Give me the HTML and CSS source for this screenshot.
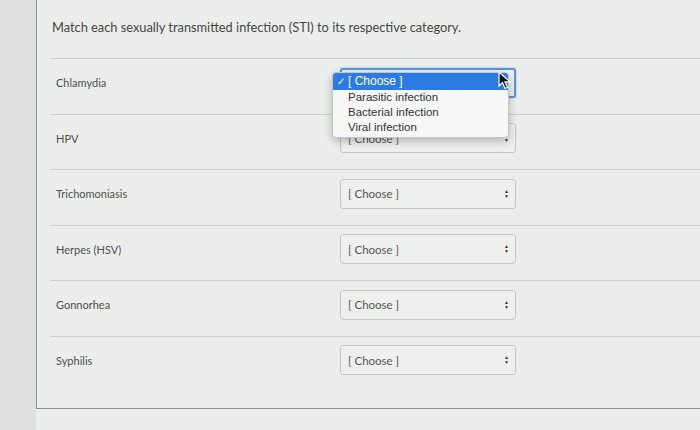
FILE: index.html
```html
<!DOCTYPE html>
<html lang="en">
<head>
  <meta charset="UTF-8">
  <title>Matching Question</title>
  <link rel="stylesheet" href="styles.css">
</head>
<body>

<div class="page">
  <div class="gutter"></div>

  <div class="panel">
    <p class="question">Match each sexually transmitted infection (STI) to its respective category.</p>

    <div class="row">
      <span class="label">Chlamydia</span>
      <div class="select focused">
        <span class="choose">[ Choose ]</span>
        <span class="arrows">&#9650;<br>&#9660;</span>
        <!-- open popup list -->
        <ul class="popup">
          <li class="picked"><span class="tick">&#10003;</span>[ Choose ]</li>
          <li>Parasitic infection</li>
          <li>Bacterial infection</li>
          <li>Viral infection</li>
        </ul>
        <svg class="cursor" width="14" height="20" viewBox="0 0 14 20">
          <path d="M1 1 L1 15 L4.5 11.5 L7 17.5 L9.5 16.5 L7 10.8 L12 10.8 Z" fill="#111" stroke="#fff" stroke-width="1.2"/>
        </svg>
      </div>
    </div>

    <div class="row">
      <span class="label">HPV</span>
      <div class="select">
        <span class="choose">[ Choose ]</span>
        <span class="arrows">&#9650;<br>&#9660;</span>
      </div>
    </div>

    <div class="row">
      <span class="label">Trichomoniasis</span>
      <div class="select">
        <span class="choose">[ Choose ]</span>
        <span class="arrows">&#9650;<br>&#9660;</span>
      </div>
    </div>

    <div class="row">
      <span class="label">Herpes (HSV)</span>
      <div class="select">
        <span class="choose">[ Choose ]</span>
        <span class="arrows">&#9650;<br>&#9660;</span>
      </div>
    </div>

    <div class="row">
      <span class="label">Gonnorhea</span>
      <div class="select">
        <span class="choose">[ Choose ]</span>
        <span class="arrows">&#9650;<br>&#9660;</span>
      </div>
    </div>

    <div class="row">
      <span class="label">Syphilis</span>
      <div class="select">
        <span class="choose">[ Choose ]</span>
        <span class="arrows">&#9650;<br>&#9660;</span>
      </div>
    </div>
  </div>
</div>

</body>
</html>
```

FILE: styles.css
```css
body {
  margin: 0;
  font-family: Lato, "Open Sans", sans-serif;
  background-color: #eceeec;
  color: #4a4a4a;
  height: 430px;
  overflow: hidden;
}
.page {
  display: flex;
  width: 700px;
}
.gutter {
  width: 36px;
  flex-shrink: 0;
  height: 430px;
  background-color: #e0e0de;
}
.panel {
  flex: 1;
  height: 409px;
  box-sizing: border-box;
  border-left: 1px solid #8e8f8e;
  border-bottom: 1px solid #8e8f8e;
  padding: 0 0 0 13px;
  background-color: #eceeec;
}
.question {
  margin: 0;
  padding: 19px 0 0 2px;
  height: 58px;
  box-sizing: border-box;
  font-size: 12.8px;
  color: #454545;
}
.row {
  display: grid;
  grid-template-columns: 284px 176px;
  align-items: center;
  height: 55.5px;
  box-sizing: border-box;
  border-top: 1px solid #cdcfcd;
  padding: 0 0 7px 6px;
}
.label {
  font-size: 11px;
  color: #4d4d4d;
}
.select {
  position: relative;
  height: 30px;
  box-sizing: border-box;
  border: 1px solid #c6c8c6;
  border-radius: 3px;
  background-color: #eef0ee;
  display: flex;
  align-items: center;
  justify-content: space-between;
  padding: 0 6px 0 7px;
}
.choose {
  font-size: 11.5px;
  color: #555;
}
.arrows {
  font-size: 5px;
  line-height: 5px;
  color: #333;
  text-align: center;
}
.focused {
  border: 2px solid #5d94d6;
  box-shadow: 0 0 2px #7eaee6;
}
.popup {
  position: absolute;
  top: 2px;
  left: -10px;
  width: 175px;
  margin: 0;
  padding: 0 0 2px 0;
  list-style: none;
  background-color: #f7f7f7;
  border: 1px solid #c5c5c5;
  border-radius: 4px;
  box-shadow: 0 3px 8px rgba(0, 0, 0, 0.25);
  font-family: "Liberation Sans", Arial, sans-serif;
  font-size: 11.5px;
  color: #333;
  z-index: 2;
}
.popup li {
  height: 15px;
  line-height: 15px;
  padding-left: 15px;
}
.popup .picked {
  background-color: #2c7be5;
  color: #fff;
  height: 17px;
  line-height: 17px;
  font-size: 12px;
  position: relative;
  border-radius: 3px 3px 0 0;
}
.tick {
  position: absolute;
  left: 4px;
  font-size: 10px;
}
.cursor {
  position: absolute;
  top: 1px;
  right: 2px;
  z-index: 3;
}
```
